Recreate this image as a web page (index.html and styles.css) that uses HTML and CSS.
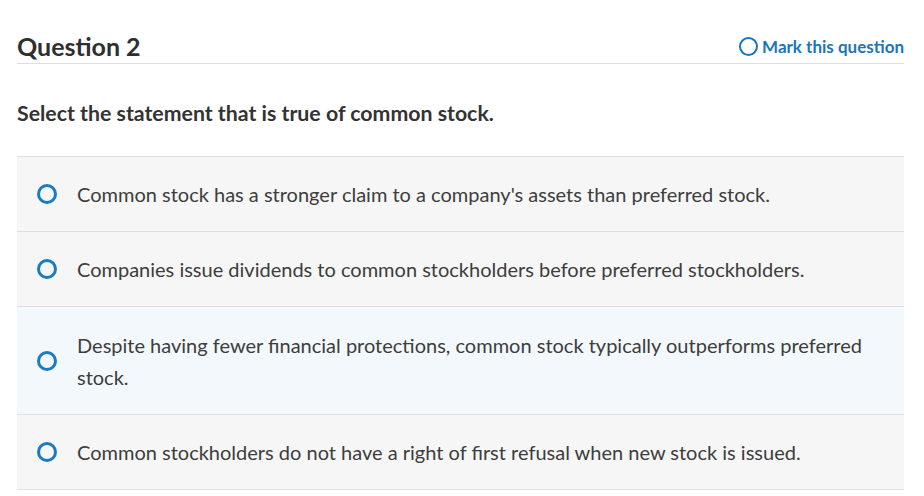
FILE: index.html
```html
<!DOCTYPE html>
<html lang="en">
<head>
    <meta charset="UTF-8">
    <meta name="viewport" content="width=device-width, initial-scale=1.0">
    <title>Question 2</title>
    <link rel="stylesheet" href="styles.css">
</head>
<body>
    <div class="question">
        <div class="question-header">
            <h2 class="question-title">Question 2</h2>
            <a class="mark-link" href="#">
                <span class="mark-circle"></span>
                Mark this question
            </a>
        </div>

        <p class="prompt">Select the statement that is true of common stock.</p>

        <div class="choices">
            <label class="choice">
                <span class="radio"></span>
                <span class="choice-text">Common stock has a stronger claim to a company's assets than preferred stock.</span>
            </label>
            <label class="choice">
                <span class="radio"></span>
                <span class="choice-text">Companies issue dividends to common stockholders before preferred stockholders.</span>
            </label>
            <label class="choice choice-hover">
                <span class="radio"></span>
                <span class="choice-text">Despite having fewer financial protections, common stock typically outperforms preferred stock.</span>
            </label>
            <label class="choice">
                <span class="radio"></span>
                <span class="choice-text">Common stockholders do not have a right of first refusal when new stock is issued.</span>
            </label>
        </div>
    </div>
</body>
</html>
```

FILE: styles.css
```css
body {
    margin: 0;
    font-family: Lato, "Open Sans", sans-serif;
    color: #333;
    background: #fff;
}

.question {
    width: 887px;
    margin-left: 17px;
    padding-top: 29px;
}

.question-header {
    display: flex;
    justify-content: space-between;
    align-items: center;
    height: 34px;
    border-bottom: 1px solid #dedede;
}

.question-title {
    margin: 0;
    font-size: 25px;
    font-weight: 700;
    color: #2f2f2f;
    line-height: 32px;
}

.mark-link {
    display: flex;
    align-items: center;
    gap: 4px;
    font-size: 17px;
    font-weight: 700;
    color: #1a75bb;
    text-decoration: none;
}

.mark-circle {
    width: 15px;
    height: 15px;
    border: 2px solid #1a75bb;
    border-radius: 50%;
}

.prompt {
    margin: 35px 0 29px;
    font-size: 21.3px;
    font-weight: 700;
    color: #333;
    line-height: 28px;
}

.choices {
    border-top: 1px solid #e0e0e0;
}

.choice {
    display: flex;
    align-items: center;
    min-height: 75px;
    padding: 5px 0;
    box-sizing: border-box;
    background: #f6f6f6;
    border-bottom: 1px solid #e0e0e0;
    cursor: pointer;
}

.choice-hover {
    background: #f2f8fc;
    padding: 22px 0 21px;
}

.radio {
    flex: none;
    width: 14px;
    height: 14px;
    margin-left: 20px;
    margin-right: 20px;
    border: 3px solid #1a7bc3;
    border-radius: 50%;
}

.choice-text {
    font-size: 20px;
    line-height: 32px;
    color: #3d3d3d;
    padding-right: 20px;
}
```
